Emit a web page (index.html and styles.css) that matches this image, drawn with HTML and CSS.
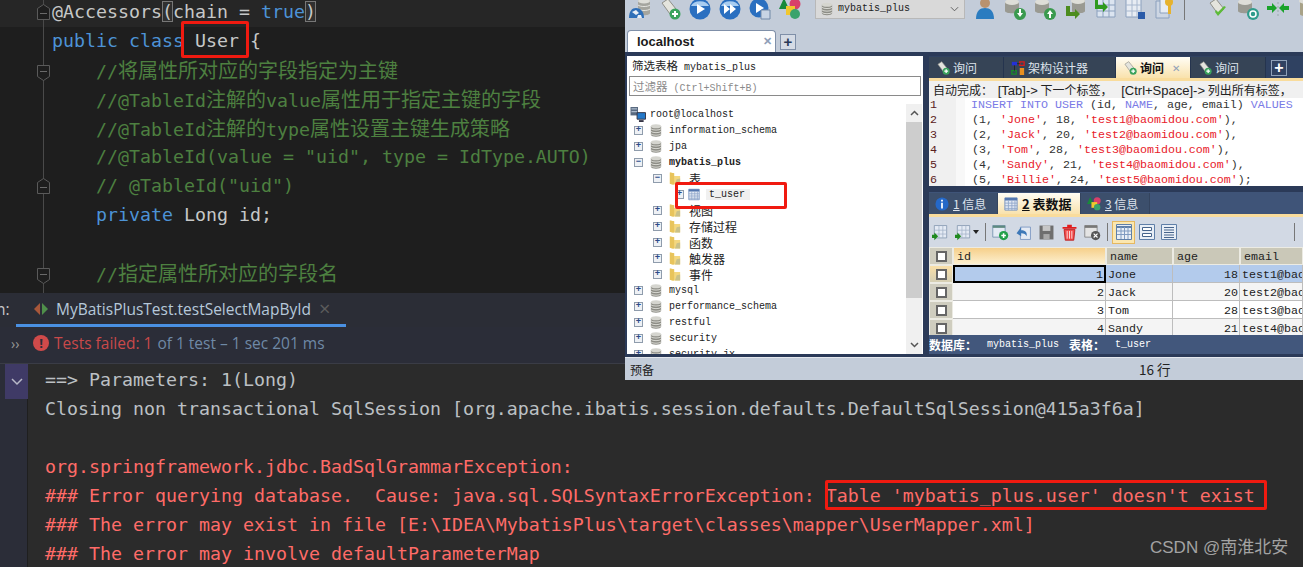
FILE: index.html
```html
<!DOCTYPE html>
<html lang="zh">
<head>
<meta charset="utf-8">
<title>MyBatisPlus</title>
<link rel="stylesheet" href="styles.css">
</head>
<body>
<svg class="defs" width="0" height="0">
  <symbol id="db" viewBox="0 0 14 16">
    <path d="M1 3v10c0 3 12 3 12 0V3z" fill="#8d8d86"/>
    <ellipse cx="7" cy="3" rx="6" ry="2.4" fill="#d5d5cf"/>
    <path d="M1 6c2 2 10 2 12 0M1 9c2 2 10 2 12 0M1 12c2 2 10 2 12 0" stroke="#e4e4de" fill="none"/>
  </symbol>
  <symbol id="dbearth" viewBox="0 0 22 22">
    <path d="M9 2v13c0 3 12 3 12 0V2z" fill="#a5a59e"/>
    <ellipse cx="15" cy="3" rx="6" ry="2.4" fill="#deded8"/>
    <path d="M9 7c2 2 10 2 12 0M9 11c2 2 10 2 12 0" stroke="#e4e4de" fill="none"/>
    <path d="M0 20c0-7 3-10 7-10s8 3 8 10z" fill="#2f6fb8"/>
    <path d="M3 14l4-2 3 3-3 2zM9 17l3 0 1 3H8z" fill="#e8eef6"/>
  </symbol>
  <symbol id="folder" viewBox="0 0 14 16">
    <path d="M1 1l5 1v3h7v10H4l-3-1z" fill="#f3d77f"/>
    <path d="M1 1l5 1v13H4l-3-1z" fill="#e8c45c"/>
    <path d="M9 9l4-1v7H7z" fill="#c9c18a"/>
  </symbol>
  <symbol id="query" viewBox="0 0 22 22">
    <path d="M3 5l6-4 8 10-6 5z" fill="#e4e4dd" stroke="#8f8f88"/>
    <circle cx="16" cy="16" r="5.5" fill="#3aa35c"/>
    <path d="M16 13v6M13 16h6" stroke="#fff" stroke-width="2"/>
  </symbol>
  <symbol id="play" viewBox="0 0 22 22">
    <circle cx="11" cy="11" r="10.5" fill="#2a6fc0"/>
    <path d="M2 8a9.5 7 0 0 1 18 0z" fill="#a9cdf0"/>
    <path d="M8 6l8 5-8 5z" fill="#fff"/>
  </symbol>
  <symbol id="play2" viewBox="0 0 22 22">
    <circle cx="11" cy="11" r="10.5" fill="#2a6fc0"/>
    <path d="M2 8a9.5 7 0 0 1 18 0z" fill="#a9cdf0"/>
    <path d="M5 6l6 5-6 5zM11 6l6 5-6 5z" fill="#fff"/>
  </symbol>
  <symbol id="playgrid" viewBox="0 0 22 22">
    <circle cx="10" cy="10" r="9.5" fill="#2a6fc0"/>
    <path d="M7 5l8 5-8 5z" fill="#fff"/>
    <path d="M12 12h9v9h-9z" fill="#c8d4e4" stroke="#7289a8"/>
  </symbol>
  <symbol id="shapes" viewBox="0 0 22 22">
    <path d="M5 0l5 11H0z" fill="#178a3a"/>
    <circle cx="16" cy="6" r="5.5" fill="#d8406a"/>
    <path d="M7 8h9v9H7z" fill="#f1c72e"/>
    <circle cx="16" cy="16" r="5" fill="#3aa36c"/>
  </symbol>
  <symbol id="user" viewBox="0 0 22 22">
    <circle cx="11" cy="5" r="5" fill="#b9926f"/>
    <path d="M2 21c0-8 4-11 9-11s9 3 9 11z" fill="#2b7cc0"/>
  </symbol>
  <symbol id="dbdown" viewBox="0 0 22 22">
    <path d="M1 4v9c0 3 14 3 14 0V4z" fill="#9a9a92"/>
    <ellipse cx="8" cy="4" rx="7" ry="3" fill="#deded8"/>
    <circle cx="16" cy="16" r="6" fill="#3a9a4e"/>
    <path d="M13 15h2v-4h2v4h2l-3 4z" fill="#fff"/>
  </symbol>
  <symbol id="dbup" viewBox="0 0 22 22">
    <path d="M1 4v9c0 3 14 3 14 0V4z" fill="#9a9a92"/>
    <ellipse cx="8" cy="4" rx="7" ry="3" fill="#deded8"/>
    <circle cx="16" cy="16" r="6" fill="#3a9a4e"/>
    <path d="M13 16h2v4h2v-4h2l-3-4z" fill="#fff"/>
  </symbol>
  <symbol id="dbarrow" viewBox="0 0 22 22">
    <path d="M8 2v11c0 3 13 3 13 0V2z" fill="#9a9a92"/>
    <ellipse cx="14" cy="3" rx="7" ry="3" fill="#deded8"/>
    <path d="M2 8h4v6h5v-3l5 5-5 5v-3H2z" fill="#4c8c1e"/>
  </symbol>
  <symbol id="gridarrow" viewBox="0 0 22 22">
    <path d="M3 1h18v18H3z" fill="#dbe4f0" stroke="#8ba0bd"/>
    <path d="M3 7h18M3 13h18M9 1v18M15 1v18" stroke="#8ba0bd"/>
    <path d="M1 1h3v6h5V4l5 5-5 5v-3H1z" fill="#2f9a1e"/>
  </symbol>
  <symbol id="griddoc" viewBox="0 0 22 22">
    <path d="M2 1h15v18H2z" fill="#e7ecf3" stroke="#8ba0bd"/>
    <path d="M2 7h15M2 13h15M8 1v18M13 1v18" stroke="#a8b8cf"/>
    <path d="M14 14h7v7h-7z" fill="#2a5aa8"/>
  </symbol>
  <symbol id="gridkey" viewBox="0 0 22 22">
    <path d="M2 3h13v17H2z" fill="#cdd6e3" stroke="#8ba0bd"/>
    <path d="M6 1h10v14H6z" fill="#e7ecf3" stroke="#8ba0bd"/>
    <circle cx="15" cy="4" r="4" fill="#e6b22e"/>
    <path d="M14 6h3v10h-3z" fill="#e6b22e"/>
  </symbol>
  <symbol id="check" viewBox="0 0 22 22">
    <path d="M3 5l6-4 8 10-6 5z" fill="#e4e4dd" stroke="#8f8f88"/>
    <path d="M8 14l3 4 8-9-2-1-6 6-2-2z" fill="#5dbb3a"/>
  </symbol>
  <symbol id="dbsync" viewBox="0 0 22 22">
    <path d="M1 4v9c0 3 14 3 14 0V4z" fill="#9a9a92"/>
    <ellipse cx="8" cy="4" rx="7" ry="3" fill="#deded8"/>
    <circle cx="16" cy="16" r="6" fill="#2f9c8c"/>
    <circle cx="16" cy="16" r="3" fill="none" stroke="#fff" stroke-width="1.5"/>
  </symbol>
  <symbol id="merge" viewBox="0 0 22 22">
    <path d="M0 8h5V5l5 5-5 5v-3H0zM22 8h-5V5l-5 5 5 5v-3h5z" fill="#19a32b"/>
    <path d="M11 0v20" stroke="#9aa" stroke-dasharray="2 2"/>
  </symbol>
  <symbol id="dblock" viewBox="0 0 22 22">
    <path d="M3 3v13c0 3 13 3 13 0V3z" fill="#a8a288"/>
    <ellipse cx="9" cy="3" rx="7" ry="3" fill="#deded8"/>
    <path d="M10 11h8v9h-8z" fill="#e0a92a"/>
  </symbol>
  <symbol id="schema" viewBox="0 0 16 16">
    <path d="M1 1h6v4H1z" fill="#2430d8"/><path d="M10 1h5v4h-5z" fill="none" stroke="#d81c1c" stroke-width="1.5"/>
    <path d="M1 11h5v4H1z" fill="none" stroke="#1a8a2a" stroke-width="1.5"/><path d="M10 8h5v8h-5z" fill="#e89020"/>
    <path d="M7 3h3M4 5v6" stroke="#222"/>
  </symbol>
  <symbol id="info" viewBox="0 0 16 16">
    <circle cx="8" cy="8" r="7.5" fill="#2468c8"/>
    <path d="M7 3h2v2H7zM7 6.500h2V13H7z" fill="#fff"/>
  </symbol>
  <symbol id="table" viewBox="0 0 16 16">
    <path d="M1 1h14v14H1z" fill="#e4eaf4" stroke="#6f8dbc"/>
    <path d="M1 1h14v3H1z" fill="#5578b0"/>
    <path d="M1 7h14M1 10h14M1 13h14M5 4v11M9 4v11M12.500 4v11" stroke="#8fa6c9"/>
  </symbol>
  <symbol id="gridadd" viewBox="0 0 22 22">
    <path d="M1 2h16v15H1z" fill="#e4eaf4" stroke="#6a8aa8"/>
    <path d="M1 2h16v3H1z" fill="#5d8a80"/>
    <circle cx="15" cy="15" r="6" fill="#22a04a"/>
    <path d="M15 12v6M12 15h6" stroke="#fff" stroke-width="2"/>
  </symbol>
  <symbol id="gridimp" viewBox="0 0 22 22">
    <path d="M3 2h16v16H3z" fill="#e4eaf4" stroke="#7f93ad"/>
    <path d="M3 8h16M3 13h16M9 2v16M14 2v16" stroke="#a4b4c8"/>
    <path d="M0 14h3v-3l5 5-5 5v-3H0z" fill="#1f8a1f"/>
  </symbol>
  <symbol id="undo" viewBox="0 0 22 22">
    <path d="M7 4h13v16H7z" fill="#e4eaf4" stroke="#6f8dbc"/>
    <path d="M2 12l6-8v4c6 0 8 3 7 8-1-3-3-4-7-4v4z" fill="#3d78b8"/>
  </symbol>
  <symbol id="disk" viewBox="0 0 22 22">
    <path d="M2 2h18v18H2z" fill="#6e6e6e"/>
    <path d="M6 2h10v7H6z" fill="#c6c6c6"/>
    <path d="M7 13h8v7H7z" fill="#a8a8a8"/>
  </symbol>
  <symbol id="trash" viewBox="0 0 22 22">
    <path d="M8 1h6v3H8zM2 4h18v2H2z" fill="#e11d1d"/>
    <path d="M4 7h14l-1.500 14h-11z" fill="#f04a4a" stroke="#b51010"/>
    <path d="M8 9v10M11 9v10M14 9v10" stroke="#fff"/>
  </symbol>
  <symbol id="griddel" viewBox="0 0 22 22">
    <path d="M1 2h16v15H1z" fill="#e4e4e4" stroke="#777"/>
    <path d="M1 2h16v3H1z" fill="#777"/>
    <circle cx="15" cy="15" r="6" fill="#555"/>
    <path d="M12.500 12.500l5 5M17.500 12.500l-5 5" stroke="#fff" stroke-width="1.500"/>
  </symbol>
  <symbol id="vgrid" viewBox="0 0 16 16">
    <path d="M.5.5h15v15H.5z" fill="#e8eef6" stroke="#5f7fa8"/>
    <path d="M.5 3h15" stroke="#5f7fa8" stroke-width="2"/>
    <path d="M1 7h14M1 10.500h14M5 3v12M8.500 3v12M12 3v12" stroke="#7f9ac0"/>
  </symbol>
  <symbol id="vform" viewBox="0 0 16 16">
    <path d="M.5.5h15v15H.5z" fill="#e8eef6" stroke="#5f7fa8"/>
    <path d="M3.500 3.500h9v3h-9zM3.500 9.500h9v3h-9z" fill="#fff" stroke="#46648c"/>
  </symbol>
  <symbol id="vtext" viewBox="0 0 16 16">
    <path d="M.5.5h15v15H.5z" fill="#e8eef6" stroke="#5f7fa8"/>
    <path d="M3 3.500h10M3 6h10M3 8.500h10M3 11h10M3 13.500h10" stroke="#46648c"/>
  </symbol>
  <symbol id="server" viewBox="0 0 16 16">
    <path d="M0 0h8v9H0z" fill="#596a80"/>
    <path d="M1 2h6M1 5h6" stroke="#c8d4e4"/>
    <path d="M7 6h9v7H7z" fill="#2478c8" stroke="#334"/>
    <path d="M9 15h5" stroke="#334" stroke-width="2"/>
  </symbol>
  <symbol id="runicon" viewBox="0 0 16 16">
    <path d="M7 2L1 8l6 6z" fill="#a8573a"/>
    <path d="M9 2l6 6-6 6z" fill="#4f8f4a"/>
  </symbol>
  <symbol id="foldup" viewBox="0 0 13 16">
    <path d="M.5 15.500v-11l6-4 6 4v11z" fill="#1e1e1e" stroke="#5a5a5a"/>
    <path d="M3 9.500h7" stroke="#6a6a6a"/>
  </symbol>
  <symbol id="folddown" viewBox="0 0 13 16">
    <path d="M.5.500v11l6 4 6-4v-11z" fill="#1e1e1e" stroke="#5a5a5a"/>
    <path d="M3 6.500h7" stroke="#6a6a6a"/>
  </symbol>
</svg>

<main class="ide">
  <section class="editor">
    <div class="gutter-line"></div>
    <div class="code">
      <div class="line current">@Accessors<span class="paren">(</span>chain = <span class="kw">true</span><span class="paren">)</span></div>
      <div class="line"><span class="kw">public class</span> User {</div>
      <div class="line in cm">//<span class="zh">将属性所对应的字段指定为主键</span></div>
      <div class="line in cm">//@TableId<span class="zh">注解的</span>value<span class="zh">属性用于指定主键的字段</span></div>
      <div class="line in cm">//@TableId<span class="zh">注解的</span>type<span class="zh">属性设置主键生成策略</span></div>
      <div class="line in cm">//@TableId(value = "uid", type = IdType.AUTO)</div>
      <div class="line in cm">// @TableId("uid")</div>
      <div class="line in"><span class="kw">private</span> Long id;</div>
      <div class="line in">&nbsp;</div>
      <div class="line in cm">//<span class="zh">指定属性所对应的字段名</span></div>
    </div>
    <svg class="fold fold-a"><use href="#foldup"/></svg>
    <svg class="fold fold-b"><use href="#folddown"/></svg>
    <svg class="fold fold-c"><use href="#foldup"/></svg>
    <svg class="fold fold-d"><use href="#folddown"/></svg>
  </section>

  <div class="run-tabs">
    <span class="run-label">n:</span>
    <div class="run-tab">
      <svg class="run-icon"><use href="#runicon"/></svg>
      <span>MyBatisPlusTest.testSelectMapById</span>
      <span class="run-close">×</span>
    </div>
  </div>

  <div class="run-status">
    <span class="chev">››</span>
    <span class="err-dot">!</span>
    <span class="fail">Tests failed: 1</span>
    <span class="muted">of 1 test – 1 sec 201 ms</span>
  </div>

  <section class="console">
    <div class="console-side"><span class="console-fold"><svg width="12" height="8" viewBox="0 0 12 8"><path d="M1 1l5 5 5-5" fill="none" stroke="#b8b8c8" stroke-width="1.500"/></svg></span></div>
    <div class="console-text">
      <div>==&gt; Parameters: 1(Long)</div>
      <div>Closing non transactional SqlSession [org.apache.ibatis.session.defaults.DefaultSqlSession@415a3f6a]</div>
      <div>&nbsp;</div>
      <div class="red">org.springframework.jdbc.BadSqlGrammarException:</div>
      <div class="red">### Error querying database.  Cause: java.sql.SQLSyntaxErrorException: Table 'mybatis_plus.user' doesn't exist</div>
      <div class="red">### The error may exist in file [E:\IDEA\MybatisPlus\target\classes\mapper\UserMapper.xml]</div>
      <div class="red">### The error may involve defaultParameterMap</div>
    </div>
  </section>
</main>

<section class="yog">
  <div class="yog-toolbar">
    <svg class="ti"><use href="#dbearth"/></svg>
    <svg class="ti"><use href="#query"/></svg>
    <svg class="ti"><use href="#play"/></svg>
    <svg class="ti"><use href="#play2"/></svg>
    <svg class="ti"><use href="#playgrid"/></svg>
    <svg class="ti"><use href="#shapes"/></svg>
    <div class="combo">
      <svg class="combo-db"><use href="#db"/></svg>
      <span class="combo-text">mybatis_plus</span>
      <svg class="combo-arrow" viewBox="0 0 10 6"><path d="M1 1l4 4 4-4" fill="none" stroke="#555"/></svg>
    </div>
    <svg class="ti"><use href="#user"/></svg>
    <svg class="ti"><use href="#dbdown"/></svg>
    <svg class="ti"><use href="#dbup"/></svg>
    <svg class="ti"><use href="#dbarrow"/></svg>
    <svg class="ti"><use href="#gridarrow"/></svg>
    <svg class="ti"><use href="#griddoc"/></svg>
    <svg class="ti"><use href="#gridkey"/></svg>
    <span class="ti-sep"></span>
    <svg class="ti"><use href="#check"/></svg>
    <svg class="ti"><use href="#dbsync"/></svg>
    <svg class="ti"><use href="#merge"/></svg>
    <svg class="ti"><use href="#dblock"/></svg>
  </div>

  <div class="conn-strip">
    <div class="conn-tab"><span>localhost</span><span class="conn-x">✕</span></div>
    <span class="conn-add">+</span>
  </div>

  <div class="yog-body">
    <aside class="browser">
      <div class="filter-title"><span class="zh-s">筛选表格</span> mybatis_plus</div>
      <div class="filter-input"><span class="zh-s">过滤器</span> (Ctrl+Shift+B)</div>
      <div class="tree-wrap">
        <div class="tree">
          <div class="node root"><svg class="n-ic"><use href="#server"/></svg>root@localhost</div>
          <div class="node l1"><span class="box">+</span><svg class="n-ic"><use href="#db"/></svg>information_schema</div>
          <div class="node l1"><span class="box">+</span><svg class="n-ic"><use href="#db"/></svg>jpa</div>
          <div class="node l1 strong"><span class="box">−</span><svg class="n-ic"><use href="#db"/></svg>mybatis_plus</div>
          <div class="node l2"><span class="box">−</span><svg class="n-ic"><use href="#folder"/></svg><span class="zh-t">表</span></div>
          <div class="node l3"><span class="box">+</span><svg class="n-ic"><use href="#table"/></svg><span class="picked">t_user</span></div>
          <div class="node l2"><span class="box">+</span><svg class="n-ic"><use href="#folder"/></svg><span class="zh-t">视图</span></div>
          <div class="node l2"><span class="box">+</span><svg class="n-ic"><use href="#folder"/></svg><span class="zh-t">存储过程</span></div>
          <div class="node l2"><span class="box">+</span><svg class="n-ic"><use href="#folder"/></svg><span class="zh-t">函数</span></div>
          <div class="node l2"><span class="box">+</span><svg class="n-ic"><use href="#folder"/></svg><span class="zh-t">触发器</span></div>
          <div class="node l2"><span class="box">+</span><svg class="n-ic"><use href="#folder"/></svg><span class="zh-t">事件</span></div>
          <div class="node l1"><span class="box">+</span><svg class="n-ic"><use href="#db"/></svg>mysql</div>
          <div class="node l1"><span class="box">+</span><svg class="n-ic"><use href="#db"/></svg>performance_schema</div>
          <div class="node l1"><span class="box">+</span><svg class="n-ic"><use href="#db"/></svg>restful</div>
          <div class="node l1"><span class="box">+</span><svg class="n-ic"><use href="#db"/></svg>security</div>
          <div class="node l1"><span class="box">+</span><svg class="n-ic"><use href="#db"/></svg>security_jx</div>
        </div>
        <div class="scroll">
          <span class="sc-arrow"><svg width="9" height="6" viewBox="0 0 9 6"><path d="M1 5l3.500-3.500L8 5" fill="none" stroke="#555" stroke-width="1.500"/></svg></span>
          <span class="sc-thumb"></span>
          <span class="sc-rest"></span>
          <span class="sc-arrow"><svg width="9" height="6" viewBox="0 0 9 6"><path d="M1 1l3.500 3.500L8 1" fill="none" stroke="#555" stroke-width="1.500"/></svg></span>
        </div>
      </div>
    </aside>

    <div class="workspace">
      <div class="q-tabs">
        <div class="q-tab"><svg class="q-ic"><use href="#query"/></svg>询问</div>
        <div class="q-tab wide"><svg class="q-ic"><use href="#schema"/></svg>架构设计器</div>
        <div class="q-tab on"><svg class="q-ic"><use href="#query"/></svg><b>询问</b><span class="q-x">✕</span></div>
        <div class="q-tab"><svg class="q-ic"><use href="#query"/></svg>询问</div>
        <span class="q-add">+</span>
      </div>
      <div class="hint">自动完成： <span class="lat">[Tab]-&gt;</span> 下一个标签， <span class="lat lat-b">[Ctrl+Space]-&gt;</span> 列出所有标签，</div>
      <div class="sql">
        <div class="nums"><div>1</div><div>2</div><div>3</div><div>4</div><div>5</div><div>6</div></div>
        <div class="sql-code">
          <div><i>INSERT INTO USER</i> (id, <i>NAME</i>, age, email) <i>VALUES</i></div>
          <div>(1, <em>'Jone'</em>, 18, <em>'test1@baomidou.com'</em>),</div>
          <div>(2, <em>'Jack'</em>, 20, <em>'test2@baomidou.com'</em>),</div>
          <div>(3, <em>'Tom'</em>, 28, <em>'test3@baomidou.com'</em>),</div>
          <div>(4, <em>'Sandy'</em>, 21, <em>'test4@baomidou.com'</em>),</div>
          <div>(5, <em>'Billie'</em>, 24, <em>'test5@baomidou.com'</em>);</div>
        </div>
      </div>
      <div class="r-tabs">
        <div class="r-tab"><svg class="q-ic"><use href="#info"/></svg><u>1</u> 信息</div>
        <div class="r-tab on"><svg class="q-ic"><use href="#table"/></svg><b><u>2</u> 表数据</b></div>
        <div class="r-tab"><svg class="q-ic"><use href="#shapes"/></svg><u>3</u> 信息</div>
      </div>
      <div class="r-toolbar">
        <svg class="rt"><use href="#gridimp"/></svg>
        <svg class="rt"><use href="#gridimp"/></svg>
        <span class="drop"></span>
        <span class="rt-sep"></span>
        <svg class="rt"><use href="#gridadd"/></svg>
        <svg class="rt"><use href="#undo"/></svg>
        <svg class="rt"><use href="#disk"/></svg>
        <svg class="rt"><use href="#trash"/></svg>
        <svg class="rt"><use href="#griddel"/></svg>
        <span class="rt-sep near"></span>
        <span class="view-on"><svg class="rv"><use href="#vgrid"/></svg></span>
        <svg class="rv"><use href="#vform"/></svg>
        <svg class="rv"><use href="#vtext"/></svg>
        <span class="rt-sep far"></span>
      </div>
      <div class="grid">
        <span class="rh"><span class="cb"></span></span><span class="ch sel">id</span><span class="ch">name</span><span class="ch">age</span><span class="ch">email</span>
        <span class="rh act"><span class="cb"></span></span><span class="c num cur">1</span><span class="c hl">Jone</span><span class="c num hl">18</span><span class="c hl">test1@baomidou.com</span>
        <span class="rh"><span class="cb"></span></span><span class="c num alt">2</span><span class="c alt">Jack</span><span class="c num alt">20</span><span class="c alt">test2@baomidou.com</span>
        <span class="rh"><span class="cb"></span></span><span class="c num">3</span><span class="c">Tom</span><span class="c num">28</span><span class="c">test3@baomidou.com</span>
        <span class="rh"><span class="cb"></span></span><span class="c num alt">4</span><span class="c alt">Sandy</span><span class="c num alt">21</span><span class="c alt">test4@baomidou.com</span>
      </div>
      <div class="info-bar"><b>数据库：</b><span class="mono">mybatis_plus</span><b class="gap">表格：</b><span class="mono">t_user</span></div>
    </div>
  </div>

  <div class="yog-status"><span class="st-left">预备</span><span class="st-mid">16 行</span></div>
</section>

<span class="mark mark-user"></span>
<span class="mark mark-table"></span>
<span class="mark mark-error"></span>
<span class="watermark">CSDN @南淮北安</span>
</body>
</html>
```
FILE: styles.css
```css
* { box-sizing: border-box; }
html, body { margin: 0; padding: 0; }
body { width: 1303px; height: 567px; overflow: hidden; position: relative; background: #2b2b2b; }
.defs { position: absolute; }

/* IDE */
.ide { display: flex; flex-direction: column; height: 567px; font-family: "DejaVu Sans Mono", "Noto Sans CJK SC", monospace; font-size: 18.27px; }
.editor { position: relative; height: 293px; flex: none; overflow: hidden; background: #1e1e1e; }
.gutter-line { position: absolute; left: 43px; top: 0; bottom: 0; width: 1px; background: #4a4a4a; z-index: 1; }
.fold { position: absolute; left: 37px; width: 13px; height: 16px; z-index: 1; }
.fold-a { top: 4px; }
.fold-b { top: 65px; }
.fold-c { top: 178px; }
.fold-d { top: 268px; }
.code { margin-top: -3px; line-height: 29px; color: #c6c8c8; }
.line { padding-left: 52px; height: 29px; white-space: pre; }
.line.current { background: #262626; height: 30px; margin-bottom: -1px; }
.line.in { padding-left: 96px; }
.kw { color: #4d93d6; }
.cm { color: #4d8040; }
.zh { font-family: "Noto Sans CJK SC", sans-serif; font-size: 20px; }
.paren { outline: 1px solid #777; outline-offset: -1px; background: #303030; }

.run-tabs { height: 34px; flex: none; display: flex; background: #2b2d36; font-family: "Open Sans", sans-serif; font-size: 15.5px; color: #b6c8da; }
.run-label { width: 16px; line-height: 33px; color: #c8c8c8; overflow: hidden; text-indent: -4px; }
.run-tab { width: 330px; display: flex; align-items: center; padding-left: 17px; gap: 7px; border-bottom: 3px solid #4a90e2; height: 34px; white-space: nowrap; }
.run-icon { width: 16px; height: 16px; }
.run-close { margin-left: 1px; font-size: 20px; color: #5c5c5c; }
.run-status { height: 37px; flex: none; display: flex; align-items: center; background: #2b2d38; border-bottom: 1px solid #3a3c46; font-family: "Open Sans", sans-serif; font-size: 15.5px; gap: 5px; padding: 0 0 4px 11px; }
.chev { color: #999; width: 17px; font-size: 14px; }
.err-dot { width: 16px; height: 16px; border-radius: 50%; background: #d04a4a; color: #2b2d38; font-weight: 700; font-size: 13px; line-height: 16px; text-align: center; }
.fail { color: #c9494a; }
.muted { color: #6f89a6; }
.console { flex: 1; display: flex; min-height: 0; background: #2b2b2b; }
.console-side { width: 28px; flex: none; background: #2b2d38; border-right: 1px solid #1f1f1f; padding-left: 5px; }
.console-fold { display: flex; width: 23px; height: 35px; background: #3f3a66; align-items: center; justify-content: center; }
.console-text { padding: 1px 0 0 17px; line-height: 29px; color: #bcc0c4; }
.console-text div { white-space: pre; }
.red { color: #ff6b68; }

/* SQLyog window */
.yog { position: absolute; left: 625px; top: 0; width: 678px; height: 380px; display: flex; flex-direction: column; background: #c3ccd9; overflow: hidden; font-family: "Liberation Sans", "Noto Sans CJK SC", sans-serif; }
.yog-toolbar { height: 28px; flex: none; display: flex; align-items: flex-start; margin-top: -2px; margin-bottom: 4px; padding-left: 4px; gap: 8px; }
.ti { width: 22px; height: 22px; flex: none; }
.ti-sep { width: 1px; height: 22px; background: #777; flex: none; margin: 0 14px 0 0; }
.combo { flex: none; width: 150px; height: 21px; display: flex; align-items: center; background: #d9d9d9; border: 1px solid #b8b8b8; margin: 0 1px 0 6px; padding-left: 5px; font-family: "Liberation Mono", monospace; font-size: 10px; color: #222; }
.combo-db { width: 12px; height: 14px; margin-right: 5px; }
.combo-text { flex: 1; }
.combo-arrow { width: 9px; height: 6px; margin-right: 5px; }
.conn-strip { height: 24px; flex: none; display: flex; align-items: flex-end; border-bottom: 2px solid #2b3a58; padding-left: 2px; }
.conn-tab { width: 149px; height: 22px; display: flex; align-items: center; justify-content: space-between; padding: 0 3px 0 9px; background: #fff; border: 1px solid #7f8fa8; border-bottom: 0; border-radius: 4px 4px 0 0; font-size: 13px; font-weight: 700; color: #1a1a1a; }
.conn-x { color: #8fa0b8; font-size: 11px; font-weight: 700; }
.conn-add { width: 16px; height: 16px; margin: 0 0 2px 4px; border: 1px solid #7f8fa8; background: #d5dbe5; color: #2b3a58; font: 700 15px/13px "Liberation Sans", sans-serif; text-align: center; }

.yog-body { flex: 1; min-height: 0; display: flex; background: #2b3a58; padding: 2px 0 3px 2px; }
.browser { width: 296px; flex: none; background: #fff; display: flex; flex-direction: column; font-family: "Liberation Mono", "Noto Sans CJK SC", monospace; font-size: 10px; color: #222; }
.zh-s { font-family: "Noto Sans CJK SC", sans-serif; font-size: 11.5px; }
.filter-title { height: 20px; line-height: 19px; padding-left: 5px; white-space: pre; }
.filter-input { height: 20px; margin: 0 2px; border: 1px solid #8a8a8a; padding-left: 3px; line-height: 18px; color: #8a8a8a; white-space: pre; }
.tree-wrap { flex: 1; min-height: 0; display: flex; margin-top: 10px; }
.tree { flex: 1; overflow: hidden; min-width: 0; }
.node { height: 16px; display: flex; align-items: center; white-space: pre; }
.root { padding-left: 3px; }
.root .n-ic { width: 16px; margin-right: 4px; }
.l1 { padding-left: 7px; }
.l2 { padding-left: 26px; }
.l3 { padding-left: 48px; }
.strong { font-weight: 700; }
.box { width: 9px; height: 9px; flex: none; border: 1px solid #8f9cac; background: #eef1f5; color: #2b4a88; font: 700 9px/7px "Liberation Mono", monospace; text-align: center; margin-right: 7px; }
.n-ic { width: 12px; height: 15px; flex: none; margin-right: 7px; }
.l2 .n-ic { margin-right: 8px; }
.l3 .n-ic { margin-right: 6px; }
.l3 .box { margin-right: 4px; }
.zh-t { font-family: "Noto Sans CJK SC", sans-serif; font-size: 12px; }
.picked { background: #f0f0f0; padding: 0 5px 0 3px; }
.scroll { width: 16px; flex: none; display: flex; flex-direction: column; margin-right: 1px; margin-top: -2px; }
.sc-arrow { height: 18px; flex: none; display: flex; align-items: center; justify-content: center; background: #f0f0f0; }
.sc-thumb { height: 176px; flex: none; background: #cdcdcd; }
.sc-rest { flex: 1; background: #f0f0f0; }

.workspace { flex: 1; min-width: 0; margin-left: 6px; display: flex; flex-direction: column; }
.q-tabs { height: 25px; flex: none; display: flex; align-items: flex-end; background: #2f4161; border-bottom: 3px solid #f9dc9c; font-family: "Noto Sans CJK SC", sans-serif; font-size: 12px; color: #dde3ec; }
.q-tab { width: 75px; height: 21px; display: flex; align-items: center; padding-left: 7px; background: #364456; border-right: 1px solid #25344e; }
.q-tab.wide { width: 112px; }
.q-tab.on { background: linear-gradient(#fffdf5, #f9e2ac); color: #111; width: 75px; }
.q-ic { width: 14px; height: 14px; margin-right: 3px; flex: none; }
.q-x { color: #8fa0b8; margin-left: 8px; font-size: 10px; }
.q-add { width: 16px; height: 16px; margin: 0 0 2px 5px; border: 1px solid #8ea0b8; color: #fff; font: 700 16px/13px "Liberation Sans", sans-serif; text-align: center; }
.hint { height: 17px; flex: none; background: #f0f0f0; padding-left: 4px; font-family: "Noto Sans CJK SC", sans-serif; font-size: 12px; line-height: 17px; white-space: pre; color: #222; overflow: hidden; }
.lat { font-family: "Liberation Sans", sans-serif; font-size: 13px; margin-left: 2px; }
.lat-b { margin-left: 6px; }
.sql { height: 94px; flex: none; display: flex; background: #fff; font-family: "Liberation Mono", monospace; font-size: 11.67px; line-height: 15px; border-bottom: 6px solid #2b3a58; overflow: hidden; }
.nums { width: 41px; flex: none; align-self: stretch; background: linear-gradient(90deg, #f0f0f0 27px, #f8f8f8 27px, #f8f8f8 36px, #fff 36px); padding-left: 1px; color: #5a2020; }
.sql-code { color: #333; margin-left: 1px; }
.sql-code div { white-space: pre; }
.sql-code div + div { margin-left: 1px; }
.sql-code i { font-style: normal; color: #7a7ae6; }
.sql-code em { font-style: normal; color: #e8202a; }
.r-tabs { height: 25px; flex: none; display: flex; align-items: flex-end; background: #3f5478; border-bottom: 3px solid #f9dc9c; font-family: "Noto Sans CJK SC", sans-serif; font-size: 12px; color: #dde3ec; }
.r-tab { width: 69px; height: 21px; display: flex; align-items: center; padding-left: 6px; background: #3c4f6c; border-right: 1px solid #34445e; white-space: pre; }
.r-tab .q-ic { margin-right: 4px; }
.r-tab.on { width: 83px; background: linear-gradient(#fffdf5, #f9e2ac); color: #111; font-size: 13px; }
.r-toolbar { height: 30px; flex: none; background: #d2d9e4; display: flex; align-items: center; padding-left: 3px; gap: 6px; }
.rt { width: 17px; height: 17px; flex: none; }
.drop { width: 0; height: 0; border: 3.500px solid transparent; border-top: 4px solid #222; margin: 3px 0 0 -5px; }
.rt-sep { width: 1px; height: 18px; background: #777; flex: none; }
.rt-sep.near { margin-right: -2px; }
.rt-sep.far { margin-left: 111px; }
.view-on { display: flex; align-items: center; justify-content: center; width: 23px; height: 23px; background: #fbe7b0; border: 1px solid #e6b860; margin-right: -2px; }
.rv { width: 16px; height: 16px; flex: none; }
.grid { height: 88px; flex: none; overflow: hidden; display: grid; grid-template-columns: 24px 153px 67px 67px 1fr; grid-auto-rows: 18px; background: #fff; font-family: "Liberation Mono", monospace; font-size: 11.67px; color: #222; white-space: nowrap; }
.rh { display: flex; align-items: center; justify-content: center; background: #cfcdbf; border: 1px solid #ecebe3; }
.rh.act { background: linear-gradient(#f9dfa8, #d5cfb4); }
.cb { width: 11px; height: 11px; background: #fff; border: 2px solid #666; }
.ch { background: #cac8b8; border: 1px solid #ecebe3; padding-left: 3px; line-height: 18px; }
.ch.sel { background: linear-gradient(#f6cf8a, #fdf0d0); }
.c { border-right: 1px solid #bdbdbd; border-bottom: 1px solid #bdbdbd; padding: 0 1px 0 2px; line-height: 20px; overflow: hidden; }
.num { text-align: right; }
.alt { background: #f4f4f4; }
.hl { background: #b3cbec; }
.cur { background: #b3cbec; border: 2px solid #000; line-height: 16px; }
.info-bar { flex: 1; min-height: 0; overflow: hidden; background: #42577c; color: #fff; display: flex; align-items: center; font-size: 12px; font-family: "Noto Sans CJK SC", sans-serif; white-space: pre; }
.info-bar .mono { font-family: "Liberation Mono", monospace; font-size: 10px; margin-left: 10px; }
.info-bar .gap { margin-left: 10px; }
.yog-status { height: 23px; flex: none; display: flex; align-items: center; font-size: 12px; color: #222; background: #c3ccd9; border-top: 1px solid #e4e8ee; font-family: "Noto Sans CJK SC", sans-serif; }
.st-left { margin-left: 5px; }
.st-mid { margin-left: 485px; font-size: 13.5px; }

/* annotations drawn over the screenshot */
.mark { position: absolute; border: 3px solid #f01a10; border-radius: 2px; }
.mark-user { left: 181px; top: 21px; width: 68px; height: 37px; }
.mark-table { left: 675px; top: 182px; width: 112px; height: 27px; }
.mark-error { left: 825px; top: 480px; width: 442px; height: 30px; }
.watermark { position: absolute; left: 1150px; top: 536px; font-family: "Liberation Sans", "Noto Sans CJK SC", sans-serif; font-size: 17px; line-height: 23px; color: #a3a3a3; white-space: nowrap; }
```
